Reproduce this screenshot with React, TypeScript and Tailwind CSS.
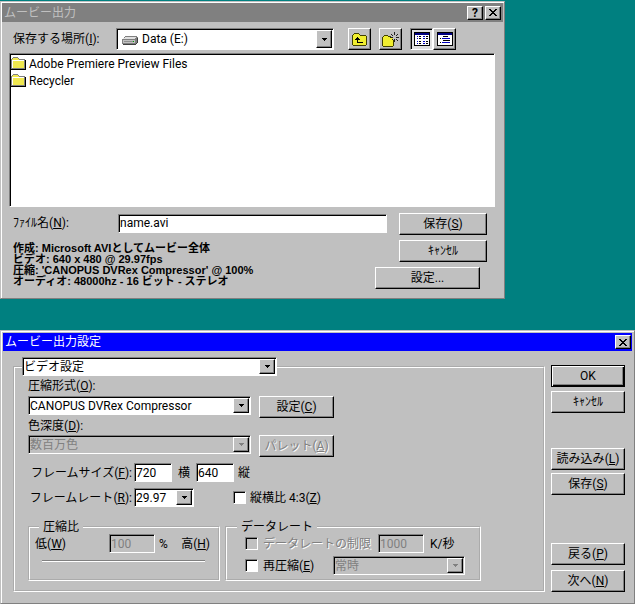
import { useState } from "react";
import type { ReactNode } from "react";

const raised =
    "border border-t-white border-l-white border-r-black border-b-black shadow-[inset_-1px_-1px_#808080] bg-[#c0c0c0]";
const defaultRaised =
    "border border-black shadow-[inset_1px_1px_#fff,inset_-1px_-1px_#000,inset_-2px_-2px_#808080] bg-[#c0c0c0]";
const sunken =
    "border border-t-[#808080] border-l-[#808080] border-r-white border-b-white shadow-[inset_1px_1px_#000]";
const group = "min-w-0 border-2 border-white [border-style:groove]";

function Key({ k }: { k: string }) {
    return (
        <>
            (<u>{k}</u>)
        </>
    );
}

function Button({
    children,
    className = "",
    disabled = false,
    primary = false,
}: {
    children: ReactNode;
    className?: string;
    disabled?: boolean;
    primary?: boolean;
}) {
    return (
        <button
            type="button"
            disabled={disabled}
            className={`h-[22px] leading-4 whitespace-nowrap disabled:text-[#808080] disabled:[text-shadow:1px_1px_#fff] ${
                primary ? defaultRaised : raised
            } ${className}`}
        >
            {children}
        </button>
    );
}

function Select({
    id,
    label,
    value,
    className = "",
    textClass = "",
    disabled = false,
}: {
    id: string;
    label?: string;
    value: string;
    className?: string;
    textClass?: string;
    disabled?: boolean;
}) {
    return (
        <div className={`relative ${className}`}>
            <select
                id={id}
                aria-label={label}
                disabled={disabled}
                defaultValue={value}
                className={`block h-full w-full appearance-none rounded-none py-0 pr-5 leading-4 opacity-100 ${sunken} ${
                    disabled ? "bg-[#c0c0c0] text-[#808080]" : "bg-white text-black"
                } ${textClass || "pl-px"}`}
            >
                <option>{value}</option>
            </select>
            <span
                className={`pointer-events-none absolute top-0.5 right-0.5 bottom-0.5 flex w-4 items-center justify-center ${raised}`}
            >
                <svg width="5" height="3" viewBox="0 0 5 3" shapeRendering="crispEdges">
                    <path d="M0 0h5v1h-1v1h-1v1h-1v-1h-1v-1h-1z" fill={disabled ? "#808080" : "#000"} />
                </svg>
            </span>
        </div>
    );
}

function TextBox({
    id,
    label,
    initial,
    className = "",
    disabled = false,
}: {
    id: string;
    label?: string;
    initial: string;
    className?: string;
    disabled?: boolean;
}) {
    const [value, setValue] = useState(initial);
    return (
        <input
            type="text"
            id={id}
            aria-label={label}
            value={value}
            disabled={disabled}
            onChange={(e) => setValue(e.target.value)}
            className={`h-[19px] min-w-0 px-px leading-4 ${sunken} ${
                disabled ? "bg-[#c0c0c0] text-[#808080]" : "bg-white"
            } ${className}`}
        />
    );
}

function CheckBox({ id, disabled = false }: { id: string; disabled?: boolean }) {
    return (
        <input
            type="checkbox"
            id={id}
            disabled={disabled}
            className={`size-[13px] shrink-0 appearance-none checked:bg-black ${sunken} ${
                disabled ? "bg-[#c0c0c0]" : "bg-white"
            }`}
        />
    );
}

function CloseIcon() {
    return (
        <svg width="8" height="7" viewBox="0 0 8 7" shapeRendering="crispEdges">
            <path
                d="M0 0h2v1h1v1h2v-1h1v-1h2v1h-1v1h-1v1h-1v1h1v1h1v1h1v1h-2v-1h-1v-1h-2v1h-1v1h-2v-1h1v-1h1v-1h1v-1h-1v-1h-1v-1h-1z"
                fill="#000"
            />
        </svg>
    );
}

function Folder() {
    return (
        <svg width="15" height="13" viewBox="0 0 15 13" shapeRendering="crispEdges" className="shrink-0">
            <path d="M1 2h1v-1h5v1h1v1h6v9h-13z" fill="#f0e850" />
            <path d="M0 2h1v10h-1zM1 1h1v1h-1zM2 0h5v1h-5zM7 1h1v1h-1zM8 2h6v1h-6zM13 3h1v9h-1zM1 11h12v1h-12z" fill="#808080" />
            <path d="M1 3h12v1h-12zM1 4h1v7h-1z" fill="#fff" />
            <path d="M0 12h15v1h-15zM14 3h1v10h-1z" fill="#000" />
        </svg>
    );
}

function DriveIcon() {
    return (
        <svg width="16" height="9" viewBox="0 0 16 9" shapeRendering="crispEdges">
            <path d="M3 0h12v1h1v6h-1v1h-1v1h-13v-1h-1v-5h1v-1h1v-1h1z" fill="#808080" />
            <path d="M3 1h11v1h-1v1h-12v-1h2z" fill="#e0e0e0" />
            <path d="M1 4h12v3h-12z" fill="#c0c0c0" />
            <path d="M2 5h9v1h-9z" fill="#909090" />
            <path d="M11 5h1v1h-1z" fill="#00a000" />
            <path d="M1 8h13v1h-13zM14 7h1v1h-1zM15 2h1v5h-1z" fill="#404040" />
        </svg>
    );
}

function UpFolderIcon() {
    return (
        <svg width="15" height="13" viewBox="0 0 15 13" shapeRendering="crispEdges">
            <path d="M1 2h1v-1h5v1h1v1h6v9h-13z" fill="#f0ee30" />
            <path
                d="M2 0h5v1h-5zM1 1h1v1h-1zM7 1h1v1h-1zM0 2h1v10h-1zM8 2h6v1h-6zM14 3h1v9h-1zM1 12h13v1h-13z"
                fill="#404000"
            />
            <path d="M5 4h1v1h1v1h1v1h-2v2h5v1h-6v-3h-2v-1h1v-1h1z" fill="#000" />
        </svg>
    );
}

function NewFolderIcon() {
    return (
        <svg width="17" height="15" viewBox="0 0 17 15" shapeRendering="crispEdges">
            <path d="M1 5h1v-1h4v1h5v9h-10z" fill="#f0ee30" />
            <path
                d="M2 3h4v1h-4zM1 4h1v1h-1zM6 4h3v1h-3zM0 5h1v9h-1zM11 8h1v6h-1zM1 14h10v1h-10z"
                fill="#404000"
            />
            <path
                d="M12 0h1v3h-1zM12 7h1v3h-1zM8 5h3v1h-3zM14 5h3v1h-3zM9 2h1v1h-1zM10 3h1v1h-1zM15 2h1v1h-1zM14 3h1v1h-1zM10 7h1v1h-1zM14 7h1v1h-1zM15 8h1v1h-1z"
                fill="#202020"
            />
        </svg>
    );
}

function ListIcon() {
    return (
        <svg width="16" height="14" viewBox="0 0 16 14" shapeRendering="crispEdges">
            <path d="M0 0h16v14h-16z" fill="#000" />
            <path d="M1 3h14v10h-14z" fill="#fff" />
            <path d="M1 1h14v2h-14z" fill="#000080" />
            <path
                d="M3 4h1v1h-1zM3 6h1v1h-1zM3 9h1v1h-1zM3 11h1v1h-1zM9 4h2v1h-2zM9 6h2v1h-2zM9 9h2v1h-2zM9 11h2v1h-2z"
                fill="#0000c0"
            />
            <path
                d="M5 4h2v1h-2zM5 6h2v1h-2zM5 9h2v1h-2zM5 11h2v1h-2zM12 4h2v1h-2zM12 6h2v1h-2zM12 9h2v1h-2zM12 11h2v1h-2z"
                fill="#000"
            />
        </svg>
    );
}

function DetailsIcon() {
    return (
        <svg width="16" height="14" viewBox="0 0 16 14" shapeRendering="crispEdges">
            <path d="M0 0h16v14h-16z" fill="#000" />
            <path d="M1 3h14v10h-14z" fill="#fff" />
            <path d="M1 1h14v2h-14z" fill="#000080" />
            <path d="M5 6h8v1h-8zM5 10h8v1h-8z" fill="#0000c0" />
            <path d="M6 4h5v1h-5zM3 6h1v1h-1zM6 8h7v1h-7zM3 10h1v1h-1z" fill="#000" />
        </svg>
    );
}

function ToolButton({ label, pressed = false, children }: { label: string; pressed?: boolean; children: ReactNode }) {
    return (
        <button
            type="button"
            aria-label={label}
            className={`flex h-[22px] w-[23px] items-center justify-center ${
                pressed ? `${sunken} bg-[#e0e0e0]` : raised
            }`}
        >
            {children}
        </button>
    );
}

function TitleButton({ label, children }: { label: string; children: ReactNode }) {
    return (
        <button
            type="button"
            aria-label={label}
            className={`flex h-3.5 w-4 items-center justify-center leading-3 font-bold text-black ${raised}`}
        >
            {children}
        </button>
    );
}

function SaveDialog() {
    const files = ["Adobe Premiere Preview Files", "Recycler"];

    return (
        <section className="mr-[130px] border border-[#c0c0c0] border-r-[#808080] border-b-[#808080] bg-[#c0c0c0] pb-[9px] shadow-[inset_1px_1px_#fff]">
            <header className="mx-px mt-px flex h-[19px] items-center bg-[#808080] pr-0.5 pl-0.5 text-[#c0c0c0]">
                <h1 className="flex-1">ムービー出力</h1>
                <TitleButton label="ヘルプ">?</TitleButton>
                <span className="w-0.5" />
                <TitleButton label="閉じる">
                    <CloseIcon />
                </TitleButton>
            </header>

            <div className="mt-1.5 flex items-center pl-3">
                <label htmlFor="place" className="w-[103px]">
                    保存する場所
                    <Key k="I" />:
                </label>
                <div className="relative w-[218px]">
                    <Select id="place" value="Data (E:)" className="h-[22px]" textClass="pl-[25px]" />
                    <span className="pointer-events-none absolute top-2 left-1.5">
                        <DriveIcon />
                    </span>
                </div>
                <div className="ml-3.5 flex gap-2">
                    <ToolButton label="一つ上のフォルダへ">
                        <UpFolderIcon />
                    </ToolButton>
                    <ToolButton label="新しいフォルダ">
                        <NewFolderIcon />
                    </ToolButton>
                    <div className="flex">
                        <ToolButton label="一覧" pressed>
                            <ListIcon />
                        </ToolButton>
                        <ToolButton label="詳細">
                            <DetailsIcon />
                        </ToolButton>
                    </div>
                </div>
            </div>

            <ul className={`mt-[3px] mr-[9px] ml-2 h-[154px] bg-white pt-px pl-px ${sunken}`}>
                {files.map((name) => (
                    <li key={name} className="flex h-[17px] items-center gap-[3px]">
                        <Folder />
                        {name}
                    </li>
                ))}
            </ul>

            <div className="mt-1.5 flex pl-3">
                <div className="flex-1">
                    <div className="flex h-5 items-center pr-3">
                        <label htmlFor="filename" className="w-[105px]">
                            ﾌｧｲﾙ名
                            <Key k="N" />:
                        </label>
                        <TextBox id="filename" initial="name.avi" className="flex-1" />
                    </div>
                    <p className="mt-2.5 font-['Liberation_Sans','Noto_Sans_CJK_JP',sans-serif] text-[11px] leading-[11px] font-bold whitespace-nowrap">
                        作成: Microsoft AVIとしてムービー全体
                        <br />
                        ビデオ: 640 x 480 @ 29.97fps
                        <br />
                        圧縮: 'CANOPUS DVRex Compressor' @ 100%
                        <br />
                        オーディオ: 48000hz - 16 ビット - ステレオ
                    </p>
                </div>
                <div className="flex w-[105px] flex-col items-end gap-[5px]">
                    <Button className="mr-[17px] w-[88px]">
                        保存
                        <Key k="S" />
                    </Button>
                    <Button className="mr-[17px] w-[88px]">ｷｬﾝｾﾙ</Button>
                    <Button className="mr-6 w-[105px]">設定...</Button>
                </div>
            </div>
        </section>
    );
}

function VideoSettings() {
    return (
        <fieldset className={`flex-1 px-[7px] pb-[9px] ${group}`}>
            <legend>
                <Select id="page" label="設定の種類" value="ビデオ設定" className="h-[19px] w-[255px]" />
            </legend>

            <div className="pl-1.5">
                <label htmlFor="codec" className="block h-5 pt-0.5 leading-4">
                    圧縮形式
                    <Key k="O" />:
                </label>
                <div className="flex gap-2">
                    <Select id="codec" value="CANOPUS DVRex Compressor" className="h-[19px] w-[223px]" />
                    <Button className="w-[75px]">
                        設定
                        <Key k="C" />
                    </Button>
                </div>
                <label htmlFor="depth" className="block h-[17px] leading-4">
                    色深度
                    <Key k="D" />:
                </label>
                <div className="flex gap-2">
                    <Select id="depth" value="数百万色" disabled className="h-[19px] w-[223px]" />
                    <Button disabled className="w-[75px]">
                        パレット
                        <Key k="A" />
                    </Button>
                </div>

                <div className="mt-1.5 flex items-center">
                    <label htmlFor="width" className="w-[106px] pr-0.5 text-right whitespace-nowrap">
                        フレームサイズ
                        <Key k="F" />:
                    </label>
                    <TextBox id="width" initial="720" className="w-[38px]" />
                    <span className="w-6 text-center">横</span>
                    <TextBox id="height" label="縦" initial="640" className="w-[38px]" />
                    <span className="ml-1">縦</span>
                </div>

                <div className="mt-1.5 flex items-center">
                    <label htmlFor="rate" className="w-[106px] pr-0.5 text-right whitespace-nowrap">
                        フレームレート
                        <Key k="R" />:
                    </label>
                    <Select id="rate" value="29.97" className="h-[19px] w-[60px]" />
                    <span className="w-[39px]" />
                    <CheckBox id="aspect" />
                    <label htmlFor="aspect" className="ml-1">
                        縦横比 4:3
                        <Key k="Z" />
                    </label>
                </div>

                <div className="mt-3 flex gap-[5px]">
                    <fieldset className={`h-[62px] w-[192px] pr-1 pl-[5px] ${group}`}>
                        <legend className="ml-1 px-1 leading-4">圧縮比</legend>
                        <div className="flex h-[17px] items-center">
                            <label htmlFor="quality" className="w-[74px]">
                                低
                                <Key k="W" />
                            </label>
                            <TextBox id="percent" label="圧縮比" initial="100" disabled className="w-[46px]" />
                            <span className="ml-1 flex-1">%</span>
                            <span className="pr-1">
                                高
                                <Key k="H" />
                            </span>
                        </div>
                        <input
                            type="range"
                            id="quality"
                            disabled
                            className="mt-2 ml-[7px] block h-0.5 w-[163px] appearance-none border-t border-b border-t-[#808080] border-b-white [&::-webkit-slider-thumb]:appearance-none"
                        />
                    </fieldset>

                    <fieldset className={`h-[62px] w-[256px] pr-2 pl-[18px] ${group}`}>
                        <legend className="-ml-2 px-1 leading-4">データレート</legend>
                        <div className="flex h-[17px] items-center">
                            <CheckBox id="limit" disabled />
                            <label
                                htmlFor="limit"
                                className="ml-[5px] w-[115px] text-[#808080] [text-shadow:1px_1px_#fff]"
                            >
                                データレートの制限
                            </label>
                            <TextBox id="kps" label="データレート" initial="1000" disabled className="w-[46px]" />
                            <span className="ml-1.5">K/秒</span>
                        </div>
                        <div className="mt-1 flex h-[19px] items-center">
                            <CheckBox id="recompress" />
                            <label htmlFor="recompress" className="ml-[5px] w-[70px]">
                                再圧縮
                                <Key k="E" />
                            </label>
                            <Select
                                id="when"
                                label="再圧縮の時期"
                                value="常時"
                                disabled
                                className="h-[19px] w-[132px]"
                            />
                        </div>
                    </fieldset>
                </div>
            </div>
        </fieldset>
    );
}

function SettingsDialog() {
    return (
        <section className="border border-[#c0c0c0] border-r-[#808080] border-b-[#808080] bg-[#c0c0c0] shadow-[inset_1px_1px_#fff]">
            <header className="mx-0.5 mt-0.5 flex h-[18px] items-center bg-[#0000ff] pr-px pl-0.5 text-white">
                <h1 className="flex-1">ムービー出力設定</h1>
                <TitleButton label="閉じる">
                    <CloseIcon />
                </TitleButton>
            </header>

            <div className="flex gap-1.5 pt-1.5 pr-[9px] pb-[11px] pl-3">
                <VideoSettings />
                <div className="flex w-[74px] flex-col pt-2">
                    <Button primary>OK</Button>
                    <Button className="mt-1">ｷｬﾝｾﾙ</Button>
                    <Button className="mt-[35px]">
                        読み込み
                        <Key k="L" />
                    </Button>
                    <Button className="mt-[3px]">
                        保存
                        <Key k="S" />
                    </Button>
                    <Button className="mt-auto">
                        戻る
                        <Key k="P" />
                    </Button>
                    <Button className="mt-[5px]">
                        次へ
                        <Key k="N" />
                    </Button>
                </div>
            </div>
        </section>
    );
}

export default function App() {
    return (
        <main className="flex min-h-screen flex-col gap-[31px] bg-[#008080] pt-px font-['Roboto','Noto_Sans_CJK_JP',sans-serif] text-[12px] leading-4 text-black">
            <SaveDialog />
            <SettingsDialog />
        </main>
    );
}
